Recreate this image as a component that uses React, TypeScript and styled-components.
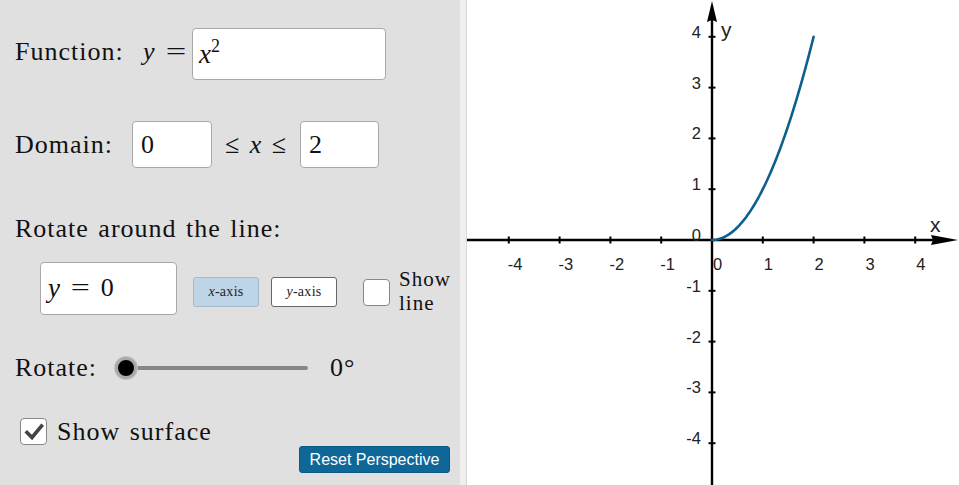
import React from 'react';
import styled, { createGlobalStyle } from 'styled-components';

const GlobalStyle = createGlobalStyle`
  * { margin: 0; padding: 0; box-sizing: border-box; }
  html, body { width: 959px; height: 485px; overflow: hidden; background: #ffffff; }
  body { font-family: 'Liberation Serif', 'DejaVu Serif', serif; color: #111; }
`;

// Graph geometry
const W = 492;
const H = 485;
const OX = 245;
const OY = 240;
const U = 50.8;
const TICKS = [-4, -3, -2, -1, 1, 2, 3, 4];

const curvePoints = (() => {
  const pts: string[] = [];
  for (let i = 0; i <= 60; i++) {
    const x = (2 * i) / 60;
    pts.push(`${(OX + x * U).toFixed(2)},${(OY - x * x * U).toFixed(2)}`);
  }
  return pts.join(' ');
})();

const Graph: React.FC = () => (
  <svg width={W} height={H} viewBox={`0 0 ${W} ${H}`}>
    <g stroke="#000" strokeWidth={2.4}>
      <line x1={0} y1={OY} x2={W - 14} y2={OY} />
      <line x1={OX} y1={H} x2={OX} y2={14} />
      {TICKS.map((t) => (
        <line key={`x${t}`} x1={OX + t * U} y1={OY - 3.5} x2={OX + t * U} y2={OY + 3.5} strokeWidth={2} />
      ))}
      {TICKS.map((t) => (
        <line key={`y${t}`} x1={OX - 3.5} y1={OY - t * U} x2={OX + 3.5} y2={OY - t * U} strokeWidth={2} />
      ))}
    </g>
    <polygon points={`${W - 1},${OY} ${W - 28},${OY - 5} ${W - 26},${OY} ${W - 28},${OY + 5}`} fill="#000" />
    <polygon points={`${OX},1 ${OX - 5},22 ${OX},20 ${OX + 5},22`} fill="#000" />
    <g fontFamily="'Liberation Sans', Arial, sans-serif" fontSize={16.5} fill="#222">
      {TICKS.map((t) => (
        <text key={`lx${t}`} x={OX + t * U - (t < 0 ? 1 : -1)} y={OY + 30}>
          {t}
        </text>
      ))}
      <text x={OX + 1} y={OY + 30}>0</text>
      {TICKS.map((t) => (
        <text key={`ly${t}`} x={OX - 11} y={OY - t * U + 1} textAnchor="end">
          {t}
        </text>
      ))}
      <text x={OX - 11} y={OY + 1} textAnchor="end">0</text>
      <text x={OX + 9} y={37} fontSize={21}>y</text>
      <text x={W - 29} y={232} fontSize={21}>x</text>
    </g>
    <polyline points={curvePoints} fill="none" stroke="#0d5f8e" strokeWidth={2.6} strokeLinecap="round" />
  </svg>
);

const App: React.FC = () => (
  <>
    <GlobalStyle />
    <Page>
      <Panel>
        <Row $top={28} $height={52}>
          <Label $w={128} $up={4}>Function:</Label>
          <MathText $w={49} $up={4}>
            <i>y</i> <Wide>=</Wide>
          </MathText>
          <Field $width={194} $top>
            <Var>x</Var>
            <Sup>2</Sup>
          </Field>
        </Row>

        <Row $top={41} $height={47}>
          <Label $w={117}>Domain:</Label>
          <Field $width={80} $pad={8}>0</Field>
          <MathText $w={88} $center>
            ≤ <i>x</i> ≤
          </MathText>
          <Field $width={79} $pad={8}>2</Field>
        </Row>

        <Row $top={46} $height={30}>
          <Label>Rotate around the line:</Label>
        </Row>

        <Row $top={18} $height={53} $indent={25}>
          <Field $width={137} $pad={7} $top>
            <Var>y</Var>
            <Eq>=</Eq>0
          </Field>
          <AxisButton $active $ml={16}>
            <i>x</i>-axis
          </AxisButton>
          <AxisButton $ml={12}>
            <i>y</i>-axis
          </AxisButton>
          <CheckBox $ml={26} $mt={7} />
          <SmallLabel>
            Show
            <br />
            line
          </SmallLabel>
        </Row>

        <Row $top={38} $height={30}>
          <Label $w={98}>Rotate:</Label>
          <Slider>
            <Track />
            <Knob />
          </Slider>
          <MathText $w={40} $ml={22}>0°</MathText>
        </Row>

        <BottomRow>
          <SurfaceToggle>
            <CheckBox $ml={5}>
              <svg width="22" height="22" viewBox="0 0 22 22">
                <path d="M4 11.5 L9 16.5 L18.5 5" fill="none" stroke="#444" strokeWidth={3.6} strokeLinecap="square" />
              </svg>
            </CheckBox>
            <Label $ml={10}>Show surface</Label>
          </SurfaceToggle>
          <ResetButton>Reset Perspective</ResetButton>
        </BottomRow>
      </Panel>
      <Divider />
      <GraphArea>
        <Graph />
      </GraphArea>
    </Page>
  </>
);

const Page = styled.div`
  display: flex;
  width: 959px;
  height: 485px;
`;

const Panel = styled.div`
  width: 460px;
  height: 485px;
  background: #e0e0e0;
  padding: 0 10px 0 15px;
  display: flex;
  flex-direction: column;
  letter-spacing: 1px;
  word-spacing: 2px;
`;

const Divider = styled.div`
  width: 7px;
  height: 485px;
  background: #efefef;
  border-right: 1px solid #d6d6d6;
`;

const GraphArea = styled.div`
  flex: 1;
  background: #fff;
  overflow: hidden;
`;

const Row = styled.div<{ $top: number; $height: number; $indent?: number }>`
  display: flex;
  align-items: center;
  margin-top: ${({ $top }) => $top}px;
  height: ${({ $height }) => $height}px;
  padding-left: ${({ $indent }) => $indent ?? 0}px;
`;

const Label = styled.span<{ $ml?: number; $w?: number; $up?: number }>`
  font-size: 26px;
  flex: none;
  width: ${({ $w }) => ($w ? `${$w}px` : 'auto')};
  margin-left: ${({ $ml }) => $ml ?? 0}px;
  margin-bottom: ${({ $up }) => $up ?? 0}px;
  white-space: nowrap;
`;

const MathText = styled.span<{ $ml?: number; $w?: number; $center?: boolean; $up?: number }>`
  font-size: 26px;
  flex: none;
  width: ${({ $w }) => ($w ? `${$w}px` : 'auto')};
  text-align: ${({ $center }) => ($center ? 'center' : 'left')};
  margin-left: ${({ $ml }) => $ml ?? 0}px;
  margin-bottom: ${({ $up }) => $up ?? 0}px;
  white-space: nowrap;
`;

const Wide = styled.span`
  display: inline-block;
  transform: scaleX(1.4);
  margin-left: 4px;
`;

const Field = styled.div<{ $width: number; $pad?: number; $top?: boolean }>`
  flex: none;
  width: ${({ $width }) => $width}px;
  height: 100%;
  padding-left: ${({ $pad }) => $pad ?? 6}px;
  padding-top: ${({ $top }) => ($top ? 10 : 0)}px;
  background: #fff;
  border: 1px solid #a8a8a8;
  border-radius: 4px;
  display: flex;
  align-items: ${({ $top }) => ($top ? 'flex-start' : 'center')};
  font-size: 26px;
  letter-spacing: 0;
`;

const Var = styled.i`
  font-size: 27px;
`;

const Sup = styled.span`
  font-size: 18px;
  margin-top: -3px;
  margin-left: 0;
`;

const Eq = styled.span`
  display: inline-block;
  transform: scaleX(1.3);
  margin: 0 13px;
`;

const AxisButton = styled.button<{ $active?: boolean; $ml?: number }>`
  flex: none;
  width: 66px;
  height: 30px;
  margin-left: ${({ $ml }) => $ml ?? 0}px;
  margin-top: 7px;
  font-family: 'Liberation Serif', serif;
  font-size: 14px;
  letter-spacing: 0.3px;
  color: #222;
  background: ${({ $active }) => ($active ? '#bed5e8' : '#fff')};
  border: 1px solid ${({ $active }) => ($active ? '#a3b9cc' : '#666')};
  border-radius: 3px;
`;

const CheckBox = styled.div<{ $ml?: number; $mt?: number }>`
  flex: none;
  width: 27px;
  height: 27px;
  margin-left: ${({ $ml }) => $ml ?? 0}px;
  margin-top: ${({ $mt }) => $mt ?? 0}px;
  background: #fff;
  border: 1px solid #888;
  border-radius: 4px;
  display: flex;
  align-items: center;
  justify-content: center;
`;

const SmallLabel = styled.span`
  font-size: 21px;
  line-height: 24px;
  margin-left: 9px;
  margin-top: 4px;
`;

const Slider = styled.div`
  position: relative;
  flex: none;
  width: 195px;
  height: 30px;
  display: flex;
  align-items: center;
`;

const Track = styled.div`
  margin-left: 13px;
  width: 182px;
  height: 4px;
  border-radius: 2px;
  background: #878787;
`;

const Knob = styled.div`
  position: absolute;
  left: 2px;
  top: 4px;
  width: 22px;
  height: 22px;
  border-radius: 50%;
  background: #000;
  border: 3px solid #a9a9a9;
  box-shadow: 0 0 0 1px #c4c4c4;
`;

const BottomRow = styled.div`
  display: flex;
  align-items: flex-start;
  margin-top: 40px;
`;

const SurfaceToggle = styled.div`
  display: flex;
  align-items: center;
  height: 27px;
  margin-top: -5px;
`;

const ResetButton = styled.button`
  margin-left: auto;
  margin-top: 23px;
  width: 151px;
  height: 27px;
  background: #0f6797;
  color: #fff;
  border: 1px solid #0b5a85;
  border-radius: 3px;
  font-family: 'Liberation Sans', Arial, sans-serif;
  font-size: 16px;
  letter-spacing: 0;
  word-spacing: 0;
`;

export default App;
